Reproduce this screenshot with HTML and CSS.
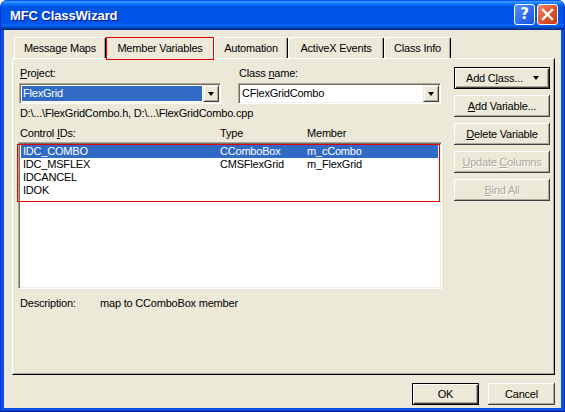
FILE: index.html
```html
<!DOCTYPE html>
<html>
<head>
<meta charset="utf-8">
<link rel="stylesheet" href="styles.css">
</head>
<body>
<div class="window">
  <div class="titlebar">
    <span class="title">MFC ClassWizard</span>
    <div class="caption-buttons">
      <span class="cap-btn help">?</span>
      <span class="cap-btn close">
        <svg width="19" height="19" viewBox="0 0 19 19"><path d="M5 5 L14 14 M14 5 L5 14" stroke="#fff" stroke-width="2.4" stroke-linecap="square"/></svg>
      </span>
    </div>
  </div>
  <div class="client">
    <div class="tabs">
      <div class="tab t-mm">Message Maps</div>
      <div class="tab t-mv sel">Member Variables</div>
      <div class="tab t-au">Automation</div>
      <div class="tab t-ax">ActiveX Events</div>
      <div class="tab t-ci">Class Info</div>
    </div>
    <div class="panel">
      <div class="main">
        <div class="fields">
          <div class="field f-project">
            <div class="field-label"><u>P</u>roject:</div>
            <div class="combo">
              <div class="combo-text selected">FlexGrid</div>
              <div class="combo-btn"><span class="tri"></span></div>
            </div>
          </div>
          <div class="field f-class">
            <div class="field-label">Class <u>n</u>ame:</div>
            <div class="combo">
              <div class="combo-text">CFlexGridCombo</div>
              <div class="combo-btn"><span class="tri"></span></div>
            </div>
          </div>
        </div>
        <div class="path">D:\...\FlexGridCombo.h, D:\...\FlexGridCombo.cpp</div>
        <div class="headers">
          <span class="h1">Control <u>I</u>Ds:</span>
          <span class="h2">Type</span>
          <span class="h3">Member</span>
        </div>
        <div class="listbox">
          <div class="row sel"><span class="c1">IDC_COMBO</span><span class="c2">CComboBox</span><span class="c3">m_cCombo</span></div>
          <div class="row"><span class="c1">IDC_MSFLEX</span><span class="c2">CMSFlexGrid</span><span class="c3">m_FlexGrid</span></div>
          <div class="row"><span class="c1">IDCANCEL</span></div>
          <div class="row"><span class="c1">IDOK</span></div>
          <div class="focus-ring"></div>
        </div>
        <div class="desc"><span class="dlabel">Description:</span><span>map to CComboBox member</span></div>
      </div>
      <div class="side">
        <div class="btn default split"><span>Add C<u>l</u>ass...</span><span class="tri"></span></div>
        <div class="btn"><span><u>A</u>dd Variable...</span></div>
        <div class="btn"><span><u>D</u>elete Variable</span></div>
        <div class="btn disabled"><span><u>U</u>pdate <u>C</u>olumns</span></div>
        <div class="btn disabled"><span><u>B</u>ind All</span></div>
      </div>
    </div>
    <div class="footer">
      <div class="btn default wide">OK</div>
      <div class="btn wide">Cancel</div>
    </div>
  </div>
</div>
</body>
</html>
```
FILE: styles.css
```css
html, body {
  margin: 0;
  padding: 0;
  background: #ffffff;
}
body {
  font-family: "Liberation Sans", Arial, sans-serif;
  font-size: 11px;
  letter-spacing: -0.2px;
  color: #000;
}
.window {
  width: 565px;
  height: 412px;
  box-sizing: border-box;
  display: flex;
  flex-direction: column;
  background: #0A4FDF;
  border-left: 1px solid #0831D9;
  border-right: 1px solid #0831D9;
  border-bottom: 1px solid #00138C;
  border-radius: 7px 7px 0 0;
  overflow: hidden;
}
.titlebar {
  height: 30px;
  flex: none;
  display: flex;
  align-items: flex-start;
  padding: 0 6px 0 9px;
  background: linear-gradient(to bottom,
    #0058EE 0, #0058EE 1px,
    #3A93FF 1px, #3A93FF 2px,
    #288EFF 2px, #288EFF 3px,
    #127DFF 3px, #127DFF 4px,
    #036FFC 4px, #036FFC 5px,
    #0262EE 5px, #0262EE 6px,
    #0057E5 6px, #0057E5 7px,
    #0054E3 7px, #0055E8 22px,
    #0055EB 23px, #005BF5 24px,
    #026AFE 25px, #0062EF 26px,
    #0052D6 27px, #0040AB 28px,
    #003092 29px, #003092 30px);
}
.title {
  flex: 1;
  color: #fff;
  font-weight: bold;
  font-size: 13px;
  letter-spacing: -0.1px;
  line-height: 15px;
  margin-top: 8px;
  text-shadow: 1px 1px #0A1883;
}
.caption-buttons {
  display: flex;
  gap: 2px;
  margin-top: 4px;
}
.cap-btn {
  width: 21px;
  height: 21px;
  box-sizing: border-box;
  border: 1px solid #fff;
  border-radius: 3px;
  display: flex;
  align-items: center;
  justify-content: center;
}
.help {
  background: linear-gradient(135deg, #5E95F9 0%, #2D6AEE 55%, #1B52D8 100%);
  color: #fff;
  font-family: "DejaVu Sans", sans-serif;
  font-weight: bold;
  font-size: 15px;
  line-height: 19px;
  letter-spacing: 0;
}
.close {
  background: linear-gradient(135deg, #F08C6C 0%, #E1552F 50%, #C63A12 100%);
}
.client {
  flex: 1;
  background: #ECE9D8;
  margin: 0 3px 3px 3px;
  padding: 7px 0 0 8px;
  display: flex;
  flex-direction: column;
}
.tabs {
  display: flex;
  height: 21px;
  margin-left: 2px;
  align-items: flex-start;
}
.tab {
  box-sizing: border-box;
  height: 21px;
  background: #ECE9D8;
  border-left: 1px solid #fff;
  border-top: 1px solid #fff;
  border-right: 1px solid #000;
  box-shadow: inset -1px 0 #ACA899;
  border-radius: 2px 2px 0 0;
  text-align: center;
  padding-top: 4px;
  line-height: 13px;
  white-space: nowrap;
}
.t-mm { width: 92px; }
.t-mv { width: 108px; }
.t-au { width: 74px; }
.t-ax { width: 96px; }
.t-ci { width: 67px; }
.tab.sel {
  position: relative;
  z-index: 1;
  height: 23px;
  border: 1px solid #E40000;
  border-radius: 0;
  box-shadow: none;
}
.panel {
  box-sizing: border-box;
  width: 543px;
  height: 317px;
  flex: none;
  border-left: 1px solid #fff;
  border-top: 1px solid #fff;
  border-right: 1px solid #000;
  border-bottom: 1px solid #000;
  box-shadow: inset -1px -1px #ACA899;
  display: flex;
  gap: 12px;
  padding: 8px 0 0 5px;
}
.main {
  width: 424px;
  display: flex;
  flex-direction: column;
}
.fields {
  display: flex;
}
.field {
  display: flex;
  flex-direction: column;
}
.f-project {
  margin-left: 1px;
  width: 202px;
}
.f-class {
  margin-left: 17px;
  width: 203px;
}
.field-label {
  line-height: 13px;
  margin: 0 0 3px 1px;
}
.combo {
  box-sizing: border-box;
  height: 21px;
  background: #fff;
  border: 1px solid;
  border-color: #ACA899 #fff #fff #ACA899;
  box-shadow: inset 1px 1px #716F64, inset -1px -1px #F1EFE2;
  padding: 1px;
  display: flex;
}
.combo-text {
  flex: 1;
  margin: 1px;
  padding-left: 1px;
  line-height: 15px;
  white-space: nowrap;
}
.combo-text.selected {
  background: #316AC5;
  color: #fff;
}
.combo-btn {
  width: 16px;
  height: 17px;
  box-sizing: border-box;
  background: #ECE9D8;
  border: 1px solid;
  border-color: #ECE9D8 #404040 #404040 #ECE9D8;
  box-shadow: inset 1px 1px #fff, inset -1px -1px #ACA899;
  display: flex;
  align-items: center;
  justify-content: center;
}
.tri {
  width: 0;
  height: 0;
  border-left: 3.5px solid transparent;
  border-right: 3.5px solid transparent;
  border-top: 4px solid #000;
}
.path {
  margin: 3px 0 0 2px;
  line-height: 13px;
  white-space: nowrap;
}
.headers {
  display: flex;
  margin: 7px 0 0 2px;
  line-height: 13px;
}
.h1 { width: 200px; }
.h2 { width: 87px; }
.listbox {
  position: relative;
  box-sizing: border-box;
  margin-top: 2px;
  height: 147px;
  background: #fff;
  border: 1px solid;
  border-color: #ACA899 #fff #fff #ACA899;
  box-shadow: inset 1px 1px #716F64, inset -1px -1px #F1EFE2;
  padding: 2px 3px 0 2px;
}
.row {
  display: flex;
  height: 13px;
  line-height: 13px;
  padding-left: 2px;
  white-space: nowrap;
}
.row.sel {
  background: #316AC5;
  color: #fff;
}
.c1 { width: 197px; }
.c2 { width: 87px; }
.focus-ring {
  position: absolute;
  left: -2px;
  top: 1px;
  width: 423px;
  height: 58px;
  box-sizing: border-box;
  border: 1px solid #E40000;
}
.desc {
  display: flex;
  margin: 8px 0 0 2px;
  line-height: 13px;
}
.dlabel { width: 80px; }
.side {
  width: 96px;
  display: flex;
  flex-direction: column;
  gap: 6px;
}
.btn {
  box-sizing: border-box;
  height: 22px;
  background: #ECE9D8;
  box-shadow: inset -1px -1px #404040, inset 1px 1px #fff, inset -2px -2px #ACA899;
  display: flex;
  align-items: center;
  justify-content: center;
  line-height: 13px;
  white-space: nowrap;
}
.btn.default {
  box-shadow: inset 0 0 0 1px #000, inset 2px 2px #fff, inset -2px -2px #404040, inset -3px -3px #ACA899;
}
.btn.split {
  justify-content: space-between;
  padding: 0 11px 0 12px;
}
.btn.split .tri {
  margin-top: -1px;
}
.btn.disabled {
  color: #ACA899;
  text-shadow: 1px 1px #fff;
}
.footer {
  display: flex;
  justify-content: flex-end;
  gap: 9px;
  margin: 8px 6px 0 0;
}
.btn.wide {
  width: 67px;
}
```
